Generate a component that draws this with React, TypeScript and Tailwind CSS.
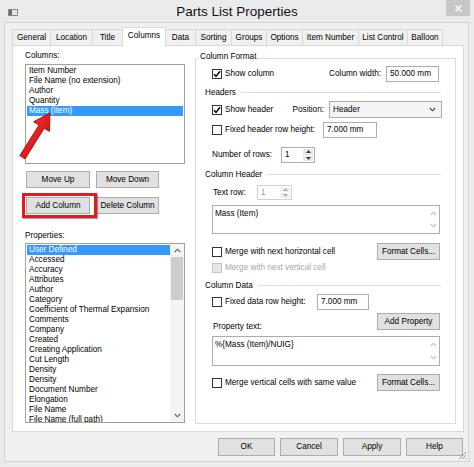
import React from "react";

const font = "font-['Liberation_Sans',Arial,sans-serif]";

function Btn({ children, className = "" }: { children: React.ReactNode; className?: string }) {
  return (
    <div className={`flex shrink-0 items-center justify-center border border-[#adadad] bg-[#e1e1e1] text-black ${className}`}>
      {children}
    </div>
  );
}

function Check({ checked = false, disabled = false }: { checked?: boolean; disabled?: boolean }) {
  return (
    <div
      className={`flex h-[10px] w-[10px] shrink-0 items-center justify-center border ${
        disabled ? "border-[#c4c4c4] bg-[#e6e6e6]" : "border-[#333333] bg-white"
      }`}
    >
      {checked && (
        <svg width="8" height="8" viewBox="0 0 8 8">
          <path d="M1 4.2 L3 6.4 L7 1.2" fill="none" stroke="#000" strokeWidth="1.4" />
        </svg>
      )}
    </div>
  );
}

function Input({ value, className = "" }: { value: string; className?: string }) {
  return (
    <div className={`flex h-[16px] shrink-0 items-center border border-[#abadb3] bg-white pl-[3px] ${className}`}>
      {value}
    </div>
  );
}

function Section({ label, className = "" }: { label: string; className?: string }) {
  return (
    <div className={`flex h-[11px] items-center gap-[5px] pl-[9px] pr-[14px] ${className}`}>
      <span>{label}</span>
      <div className="flex-1 border-t border-[#dcdcdc]" />
    </div>
  );
}

function Spin({ value, disabled = false, className = "" }: { value: string; disabled?: boolean; className?: string }) {
  const c = disabled ? "#b0b0b0" : "#404040";
  return (
    <div
      className={`flex shrink-0 border bg-white ${disabled ? "border-[#d0d0d0] text-[#9a9a9a]" : "border-[#abadb3]"} ${className}`}
    >
      <span className="flex flex-1 items-center pl-[3px]">{value}</span>
      <div className={`m-px flex w-[10px] flex-col ${disabled ? "bg-[#f0f0f0]" : "bg-[#e6e6e6]"}`}>
        <div className="flex flex-1 items-center justify-center border-b border-white">
          <svg width="5" height="3" viewBox="0 0 5 3">
            <path d="M0 3 L2.5 0 L5 3 Z" fill={c} />
          </svg>
        </div>
        <div className="flex flex-1 items-center justify-center">
          <svg width="5" height="3" viewBox="0 0 5 3">
            <path d="M0 0 L2.5 3 L5 0 Z" fill={c} />
          </svg>
        </div>
      </div>
    </div>
  );
}

function Chevron({ up = false, color = "#c0c0c0" }: { up?: boolean; color?: string }) {
  return (
    <svg width="7" height="5" viewBox="0 0 7 5">
      <path d={up ? "M0.8 4 L3.5 1.2 L6.2 4" : "M0.8 1 L3.5 3.8 L6.2 1"} fill="none" stroke={color} strokeWidth="1.1" />
    </svg>
  );
}

function TextBox({ value, className = "" }: { value: string; className?: string }) {
  return (
    <div className={`flex shrink-0 border border-[#abadb3] bg-white ${className}`}>
      <div className="flex-1 pl-[2px] pt-[3px]">{value}</div>
      <div className="flex w-[12px] flex-col items-center justify-between py-[5px]">
        <Chevron up />
        <Chevron />
      </div>
    </div>
  );
}

const tabs: { label: string; w: string; active?: boolean }[] = [
  { label: "General", w: "w-[39px]" },
  { label: "Location", w: "w-[43px]" },
  { label: "Title", w: "w-[31px]" },
  { label: "Columns", w: "w-[44px]", active: true },
  { label: "Data", w: "w-[31px]" },
  { label: "Sorting", w: "w-[37px]" },
  { label: "Groups", w: "w-[36px]" },
  { label: "Options", w: "w-[37px]" },
  { label: "Item Number", w: "w-[57px]" },
  { label: "List Control", w: "w-[50px]" },
  { label: "Balloon", w: "w-[36px]" },
];

const columns = ["Item Number", "File Name (no extension)", "Author", "Quantity", "Mass (Item)"];

const props = [
  "User Defined",
  "Accessed",
  "Accuracy",
  "Attributes",
  "Author",
  "Category",
  "Coefficient of Thermal Expansion",
  "Comments",
  "Company",
  "Created",
  "Creating Application",
  "Cut Length",
  "Density",
  "Density",
  "Document Number",
  "Elongation",
  "File Name",
  "File Name (full path)",
];

export default function App() {
  return (
    <div className={`flex h-[467px] w-[474px] flex-col overflow-hidden bg-[#ebebeb] text-[8.2px] leading-[10px] text-black ${font}`}>
      {/* Title bar */}
      <div className="grid h-[22px] shrink-0 grid-cols-[1fr_auto_1fr]">
        <div className="flex items-start pl-[8px] pt-[9px]">
          <svg width="10" height="7" viewBox="0 0 10 7">
            <rect x="0.5" y="0.5" width="9" height="6" fill="#e4e4e4" stroke="#8a8a8a" />
            <rect x="1" y="1" width="3" height="5" fill="#6b6b6b" />
          </svg>
        </div>
        <div className="pt-[1px] text-[13.5px] leading-[22px] text-[#111]">Parts List Properties</div>
        <div className="flex items-start justify-end pr-[4px]">
          <div className="flex h-[16px] w-[24px] items-center justify-center bg-[#c7c7c7]">
            <svg width="7" height="7" viewBox="0 0 7 7">
              <path d="M0.5 0.5 L6.5 6.5 M6.5 0.5 L0.5 6.5" stroke="#fff" strokeWidth="1.3" />
            </svg>
          </div>
        </div>
      </div>

      {/* Client */}
      <div className="relative ml-[4px] mr-[5px] flex h-[440px] shrink-0 flex-col border border-[#d4d4d4] bg-[#f0f0f0] pl-[7px] pr-[4px] pt-[4px]">
        {/* Tabs */}
        <div className="flex h-[18px] shrink-0 items-end">
          {tabs.map((t, i) =>
            t.active ? (
              <div
                key={t.label}
                className={`relative z-10 -mb-px flex h-[19px] shrink-0 items-center justify-center border border-b-0 border-[#d9d9d9] bg-white pb-[2px] ${t.w} ${i > 0 ? "-ml-px" : ""}`}
              >
                {t.label}
              </div>
            ) : (
              <div
                key={t.label}
                className={`flex h-[16px] shrink-0 items-center justify-center border border-b-0 border-[#d9d9d9] bg-[#f0f0f0] ${t.w} ${i > 0 ? "-ml-px" : ""}`}
              >
                {t.label}
              </div>
            )
          )}
        </div>

        {/* Tab panel */}
        <div className="flex h-[387px] w-[452px] shrink-0 items-start border border-[#d9d9d9] bg-white pl-[12px]">
          {/* Left column */}
          <div className="relative flex w-[160px] shrink-0 flex-col">
            <div className="mt-[5px] h-[10px]">Columns:</div>
            <div className="mt-[3px] flex h-[100px] flex-col border border-[#a0a0a0] px-px pt-px">
              {columns.map((c, i) => (
                <div key={c} className={`h-[10px] pl-[2px] ${i === 4 ? "bg-[#3399ff] text-white" : ""}`}>
                  {c}
                </div>
              ))}
            </div>
            <div className="mt-[7px] flex gap-[6px] pl-px">
              <Btn className="h-[17px] w-[64px]">Move Up</Btn>
              <Btn className="h-[17px] w-[63px]">Move Down</Btn>
            </div>
            <div className="mt-[9px] flex gap-[6px] pl-px">
              <div className="relative">
                <Btn className="h-[17px] w-[64px]">Add Column</Btn>
                <div className="absolute -left-[4px] -top-[4px] h-[25px] w-[75px] border-[3px] border-[#e11b22] shadow-[1px_1px_1px_rgba(0,0,0,0.35)]" />
              </div>
              <Btn className="h-[17px] w-[63px]">Delete Column</Btn>
            </div>
            <div className="mt-[17px] h-[10px]">Properties:</div>
            <div className="mt-[2px] flex h-[180px] overflow-hidden border border-[#a0a0a0]">
              <div className="flex flex-1 flex-col overflow-hidden pl-px pt-px">
                {props.map((p, i) => (
                  <div key={i} className={`h-[10px] shrink-0 whitespace-nowrap pl-[2px] ${i === 0 ? "bg-[#3399ff] text-white" : ""}`}>
                    {p}
                  </div>
                ))}
              </div>
              <div className="flex w-[14px] shrink-0 flex-col bg-[#f4f4f4]">
                <div className="flex h-[13px] items-center justify-center">
                  <Chevron up color="#606060" />
                </div>
                <div className="mx-[1px] h-[43px] bg-[#cdcdcd]" />
                <div className="flex-1" />
                <div className="flex h-[13px] items-center justify-center">
                  <Chevron color="#606060" />
                </div>
              </div>
            </div>

            {/* red arrow annotation */}
            <svg className="absolute left-[-7px] top-[66px]" width="40" height="50" viewBox="0 0 40 50">
              <defs>
                <linearGradient id="rg" x1="0" y1="0" x2="1" y2="1">
                  <stop offset="0" stopColor="#ff4040" />
                  <stop offset="1" stopColor="#c40000" />
                </linearGradient>
              </defs>
              <polygon
                points="32,1 31.5,19.5 26.2,16.3 7,47 1.8,43.6 21,13 15.5,9.8"
                fill="url(#rg)"
                stroke="#9a0000"
                strokeWidth="0.8"
                strokeLinejoin="round"
              />
            </svg>
          </div>

          {/* Right group */}
          <div className="relative ml-[10px] mt-[12px] flex h-[366px] w-[261px] shrink-0 flex-col border border-[#dcdcdc]">
            <span className="absolute -top-[7px] left-[3px] bg-white px-[1px]">Column Format</span>

            <div className="mt-[7px] flex h-[16px] items-center pl-[16px] pr-[16px]">
              <Check checked />
              <span className="ml-[3px]">Show column</span>
              <span className="ml-auto">Column width:</span>
              <Input value="50.000 mm" className="ml-[5px] w-[53px]" />
            </div>

            <Section label="Headers" className="mt-[5px]" />

            <div className="mt-[3px] flex h-[17px] items-center pl-[16px] pr-[13px]">
              <Check checked />
              <span className="ml-[3px]">Show header</span>
              <span className="ml-auto">Position:</span>
              <div className="ml-[5px] flex h-[17px] w-[113px] items-center border border-[#acacac] bg-[#f4f4f4] pl-[3px] pr-[5px]">
                <span className="flex-1">Header</span>
                <Chevron color="#404040" />
              </div>
            </div>

            <div className="mt-[4px] flex h-[16px] items-center pl-[16px]">
              <Check />
              <span className="ml-[3px] w-[98px]">Fixed header row height:</span>
              <Input value="7.000 mm" className="w-[54px]" />
            </div>

            <div className="mt-[9px] flex h-[16px] items-center pl-[16px]">
              <span className="w-[69px]">Number of rows:</span>
              <Spin value="1" className="h-[16px] w-[34px]" />
            </div>

            <Section label="Column Header" className="mt-[6px]" />

            <div className="mt-[5px] flex h-[15px] items-center pl-[17px]">
              <span className="w-[44px]">Text row:</span>
              <Spin value="1" disabled className="h-[15px] w-[35px]" />
            </div>

            <TextBox value="Mass (Item)" className="ml-[16px] mt-[5px] h-[29px] w-[228px]" />

            <div className="mt-[9px] flex h-[17px] items-center pl-[16px] pr-[15px]">
              <Check />
              <span className="ml-[3px]">Merge with next horizontal cell</span>
              <Btn className="ml-auto h-[17px] w-[63px]">Format Cells...</Btn>
            </div>

            <div className="mt-[3px] flex h-[10px] items-center pl-[16px] text-[#a6a6a6]">
              <Check disabled />
              <span className="ml-[3px]">Merge with next vertical cell</span>
            </div>

            <Section label="Column Data" className="mt-[7px]" />

            <div className="mt-[3px] flex h-[16px] items-center pl-[16px]">
              <Check />
              <span className="ml-[3px] w-[92px]">Fixed data row height:</span>
              <Input value="7.000 mm" className="w-[52px]" />
            </div>

            <div className="mt-[3px] flex h-[19px] pl-[17px] pr-[15px]">
              <span className="self-end">Property text:</span>
              <Btn className="ml-auto h-[17px] w-[63px] self-start">Add Property</Btn>
            </div>

            <TextBox value="%{Mass (Item)/NUIG}" className="ml-[16px] mt-[4px] h-[30px] w-[228px]" />

            <div className="mt-[8px] flex h-[17px] items-center pl-[16px] pr-[15px]">
              <Check />
              <span className="ml-[3px]">Merge vertical cells with same value</span>
              <Btn className="ml-auto h-[17px] w-[63px]">Format Cells...</Btn>
            </div>
          </div>
        </div>

        {/* Bottom buttons */}
        <div className="mt-[6px] flex justify-end gap-[5px] pr-[1px]">
          <Btn className="h-[18px] w-[57px]">OK</Btn>
          <Btn className="h-[18px] w-[58px]">Cancel</Btn>
          <Btn className="h-[18px] w-[58px]">Apply</Btn>
          <Btn className="h-[18px] w-[57px]">Help</Btn>
        </div>

        {/* resize grip */}
        <svg className="absolute bottom-[1px] right-[1px]" width="10" height="10" viewBox="0 0 10 10">
          <path d="M9 2 L2 9 M9 5 L5 9 M9 8 L8 9" stroke="#9a9a9a" strokeWidth="1" />
        </svg>
      </div>
    </div>
  );
}
